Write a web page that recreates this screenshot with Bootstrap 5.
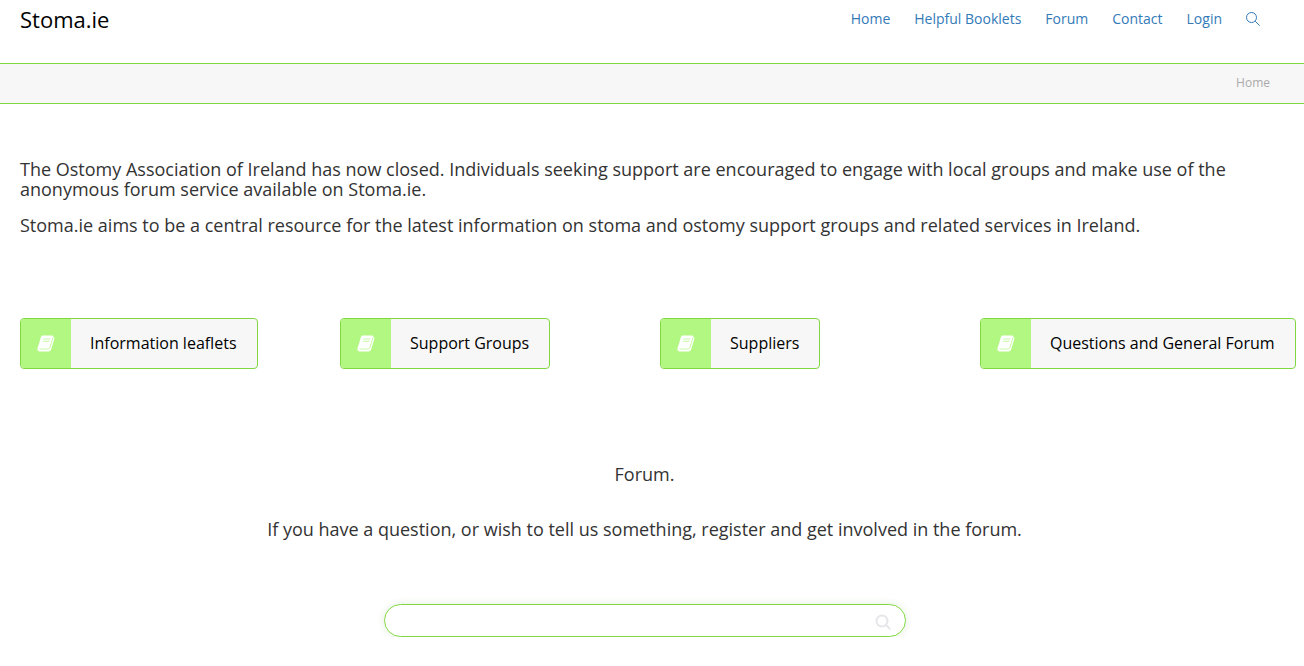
<!DOCTYPE html>
<html lang="en">
<head>
<meta charset="utf-8">
<meta name="viewport" content="width=device-width, initial-scale=1">
<title>Stoma.ie</title>
<link href="https://cdn.jsdelivr.net/npm/bootstrap@5.3.0/dist/css/bootstrap.min.css" rel="stylesheet">
<style>
body{font-family:"Open Sans","Noto Sans",sans-serif;color:#333;background:#fff}
.site-head{min-height:63px;padding:0 44px 0 20px}
.site-name{font-size:22px;line-height:38px;color:#000}
.site-nav{column-gap:24px;font-size:14px;line-height:38px}
.site-nav a,.site-nav button{color:#337ab7;text-decoration:none}
.site-nav svg{width:14px;height:14px}
.crumbs{background:#f7f7f7;border:solid #81d742;border-width:1px 0;font-size:12px;line-height:19px;padding:9px 34px 11px 20px}
.crumbs a{color:#aaa;text-decoration:none}
.intro{padding:55px 20px 0;font-size:18px;line-height:20px}
.intro p{margin-bottom:16px}
.tiles{padding:67px 4px 0 20px}
.tile{border:1px solid #81d742;border-radius:4px;background:#f7f7f7;color:#000;text-decoration:none;font-size:16px;line-height:49px;white-space:nowrap}
.tile-icon{width:50px;background:#b2f781;border-radius:3px 0 0 3px}
.tile-icon svg{width:18px;height:18px}
.tile-text{padding:0 20px 0 19px}
.forum{padding:95px 35px 0 20px;font-size:18px;line-height:20px}
.forum h2{font-size:18px;line-height:20px;font-weight:400;margin-bottom:35px}
.forum p{margin-bottom:65px}
.search{max-width:522px;height:33px;border:1px solid #81d742;border-radius:17px;box-shadow:0 0 8px #e2eddc}
.search input,.search input:focus{background:none;box-shadow:none}
.search button{padding:3px 14px 0 0}
.search svg{width:16px;height:16px}
</style>
</head>
<body>
<svg class="d-none" aria-hidden="true">
<symbol id="book" viewBox="0 1 18 18"><path fill="#fff" d="M5.500 1.500h9.500q1.200 0 1.300 1.200 1.500.4 1.100 1.900l-3.200 10.600q-.6 2.300-2.800 2.300H2.900Q.2 17.500.4 14.800L3.900 3.300q.5-1.800 1.600-1.800z"/><path fill="none" stroke="#b2f781" stroke-width=".7" stroke-linecap="round" d="M6.800 5h6M6.100 7.300h6M2.600 15h8.600q1.300 0 1.700-1.300L16 3.500"/></symbol>
</svg>
<header class="site-head d-flex flex-wrap justify-content-between align-items-start">
<a class="site-name text-decoration-none" href="#">Stoma.ie</a>
<nav class="site-nav d-flex flex-wrap" aria-label="Main">
<a href="#">Home</a><a href="#">Helpful Booklets</a><a href="#">Forum</a><a href="#">Contact</a><a href="#">Login</a>
<button class="border-0 bg-transparent p-0 d-flex align-items-center" type="button" aria-label="Search the site"><svg viewBox="0 0 14 14" fill="none" stroke="currentColor" aria-hidden="true"><circle cx="5.500" cy="5.500" r="5"/><path d="M9.200 9.200l4.500 4.500"/></svg></button>
</nav>
</header>
<nav class="crumbs text-end" aria-label="Breadcrumb"><a href="#">Home</a></nav>
<main>
<section class="intro">
<p>The Ostomy Association of Ireland has now closed. Individuals seeking support are encouraged to engage with local groups and make use of the anonymous forum service available on Stoma.ie.</p>
<p>Stoma.ie aims to be a central resource for the latest information on stoma and ostomy support groups and related services in Ireland.</p>
</section>
<section class="tiles">
<div class="row g-0">
<div class="col-12 col-md-6 col-xl-3"><a class="tile d-inline-flex align-top" href="#"><span class="tile-icon d-flex align-items-center justify-content-center"><svg aria-hidden="true"><use href="#book"/></svg></span><span class="tile-text">Information leaflets</span></a></div>
<div class="col-12 col-md-6 col-xl-3"><a class="tile d-inline-flex align-top" href="#"><span class="tile-icon d-flex align-items-center justify-content-center"><svg aria-hidden="true"><use href="#book"/></svg></span><span class="tile-text">Support Groups</span></a></div>
<div class="col-12 col-md-6 col-xl-3"><a class="tile d-inline-flex align-top" href="#"><span class="tile-icon d-flex align-items-center justify-content-center"><svg aria-hidden="true"><use href="#book"/></svg></span><span class="tile-text">Suppliers</span></a></div>
<div class="col-12 col-md-6 col-xl-3"><a class="tile d-inline-flex align-top" href="#"><span class="tile-icon d-flex align-items-center justify-content-center"><svg aria-hidden="true"><use href="#book"/></svg></span><span class="tile-text">Questions and General Forum</span></a></div>
</div>
</section>
<section class="forum text-center">
<h2>Forum.</h2>
<p>If you have a question, or wish to tell us something, register and get involved in the forum.</p>
<form class="search d-flex align-items-center mx-auto" role="search">
<input class="form-control border-0 py-0" type="search" aria-label="Search the forum">
<button class="border-0 bg-transparent d-flex" type="submit" aria-label="Search"><svg viewBox="0 0 16 16" fill="none" stroke="#e6e6ea" stroke-width="2" stroke-linecap="round" aria-hidden="true"><circle cx="7" cy="7" r="5.500"/><path d="M11.200 11.200l3.500 3.500"/></svg></button>
</form>
</section>
</main>
<script src="https://cdn.jsdelivr.net/npm/bootstrap@5.3.0/dist/js/bootstrap.bundle.min.js"></script>
</body>
</html>
